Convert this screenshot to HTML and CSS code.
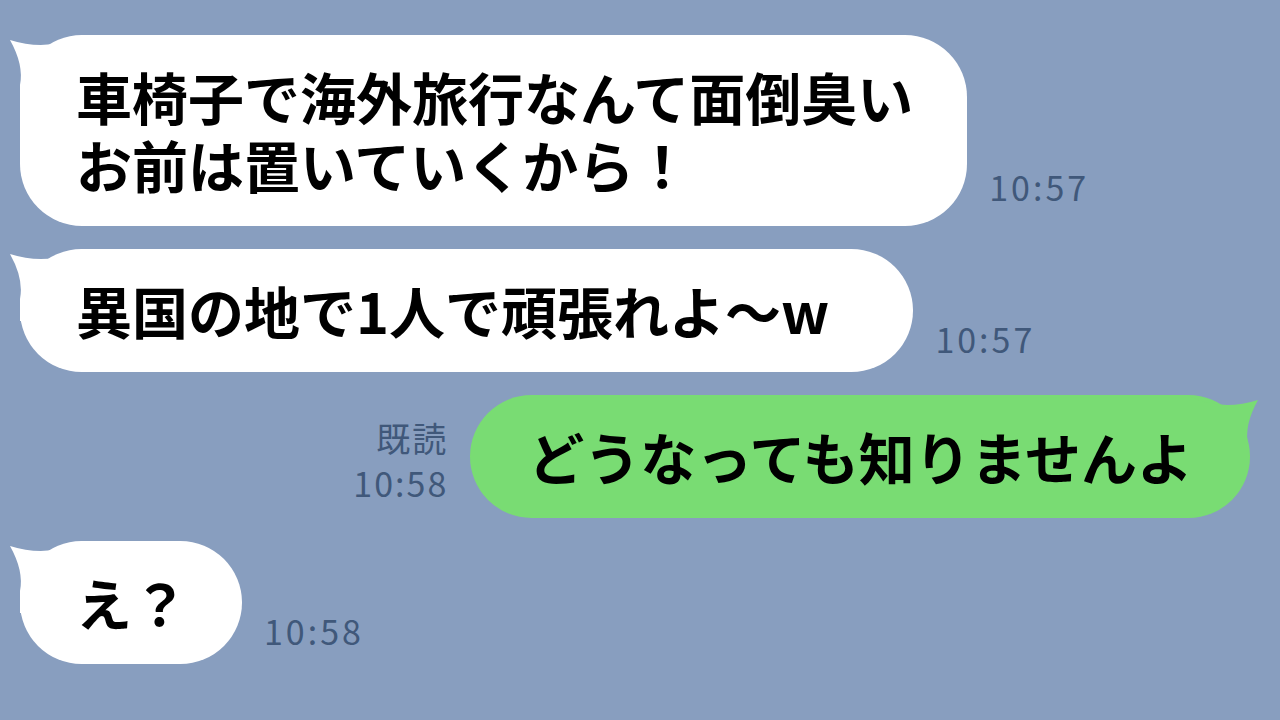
FILE: index.html
```html
<!DOCTYPE html>
<html lang="ja">
<head>
  <meta charset="UTF-8" />
  <meta name="viewport" content="width=device-width, initial-scale=1.0" />
  <title>トーク</title>
  <link rel="stylesheet" href="styles.css">
</head>
<body>
  <div class="chat">
    <div class="row left">
      <div class="bubble white">
        <svg class="tail" viewBox="0 0 80 72" width="80" height="72"><path d="M0,5 Q38,17 72,0 L72,72 L10,72 L10,50 Q14,30 0,5 Z"/></svg>
        <p>車椅子で海外旅行なんて面倒臭い<br>お前は置いていくから！</p>
      </div>
      <div class="meta first">10:57</div>
    </div>

    <div class="row left">
      <div class="bubble white wide">
        <svg class="tail" viewBox="0 0 80 72" width="80" height="72"><path d="M0,5 Q38,17 72,0 L72,72 L10,72 L10,50 Q14,30 0,5 Z"/></svg>
        <p>異国の地で1人で頑張れよ〜w</p>
      </div>
      <div class="meta">10:57</div>
    </div>

    <div class="row right">
      <div class="meta read">既読<br>10:58</div>
      <div class="bubble green">
        <svg class="tail" viewBox="0 0 80 72" width="80" height="72"><path d="M0,5 Q38,17 72,0 L72,72 L10,72 L10,50 Q14,30 0,5 Z"/></svg>
        <p>どうなっても知りませんよ</p>
      </div>
    </div>

    <div class="row left">
      <div class="bubble white">
        <svg class="tail" viewBox="0 0 80 72" width="80" height="72"><path d="M0,5 Q38,17 72,0 L72,72 L10,72 L10,50 Q14,30 0,5 Z"/></svg>
        <p>え？</p>
      </div>
      <div class="meta">10:58</div>
    </div>
  </div>
</body>
</html>
```

FILE: styles.css
```css
html, body {
  margin: 0;
  height: 100%;
}
body {
  background: #889ebf;
  font-family: "Noto Sans CJK JP", "Noto Sans", sans-serif;
  color: #000;
  overflow: hidden;
}
.chat {
  display: flex;
  flex-direction: column;
  gap: 23px;
  padding: 35px 30px 0 20px;
}
.row {
  display: flex;
  align-items: flex-end;
  gap: 22px;
}
.row.right {
  justify-content: flex-end;
}
.bubble {
  position: relative;
  border-radius: 62px;
  padding: 27px 54px 28px 56px;
}
.bubble p {
  position: relative;
  margin: 0;
  font-size: 56px;
  font-weight: 700;
  line-height: 68px;
  white-space: nowrap;
}
.bubble.white {
  background: #fff;
}
.bubble.wide {
  padding-right: 84px;
}
.bubble.green {
  background: #79dc73;
  padding-left: 58px;
  padding-right: 57px;
}
.tail {
  position: absolute;
  top: 0;
  left: -10px;
}
.white .tail {
  fill: #fff;
}
.green .tail {
  fill: #79dc73;
  left: auto;
  right: -8px;
  transform: scaleX(-1);
}
.meta {
  font-size: 34px;
  line-height: 45px;
  letter-spacing: 3px;
  color: #40587a;
  margin-bottom: 11px;
}
.meta.first {
  margin-bottom: 17px;
}
.meta.read {
  text-align: right;
  letter-spacing: 2px;
  margin-bottom: 13px;
}
```
